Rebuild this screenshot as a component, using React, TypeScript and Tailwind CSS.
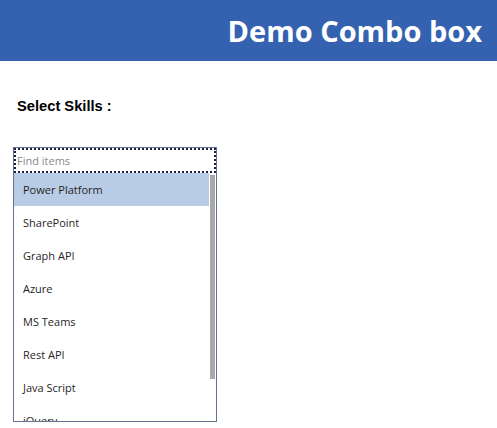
import React from 'react';

const skills = ['Power Platform', 'SharePoint', 'Graph API', 'Azure', 'MS Teams', 'Rest API', 'Java Script', 'jQuery'];

const App: React.FC = () => {
  return (
    <div className="w-[497px] h-[428px] bg-white overflow-hidden">
      <header className="h-[61px] bg-[#3562b0] flex items-center justify-end pr-[15px]">
        <h1 className="font-['Open_Sans',sans-serif] font-bold text-[29px] leading-none text-white">
          Demo Combo box
        </h1>
      </header>

      <div className="mt-[37px] pl-[17px] font-['Liberation_Sans',Arial,sans-serif] font-bold text-[14.7px] leading-[17px] text-black">
        Select Skills :
      </div>

      {/* Combo box */}
      <div className="mt-[32px] ml-[13px] w-[204px] h-[275px] border border-[#66708f] flex flex-col font-['Open_Sans',sans-serif]">
        <div className="h-[25px] shrink-0 border-2 border-dotted border-[#1c1f3d] flex items-center pl-[1px] pt-[1px] text-[11px] text-[#8a8a8a]">
          Find items
        </div>
        <div className="flex-1 flex overflow-hidden">
          <div className="flex-1 flex flex-col">
            {skills.map((skill, i) => (
              <div
                key={skill}
                className={
                  i === 0
                    ? 'h-[33px] shrink-0 flex items-center pl-[9px] pt-[2px] text-[11px] text-[#1f1f1f] bg-[#b9cce5]'
                    : 'h-[33px] shrink-0 flex items-center pl-[9px] pt-[2px] text-[11px] text-[#1f1f1f]'
                }
              >
                {skill}
              </div>
            ))}
          </div>
          <div className="w-[7px] pt-[2px] pl-[1px] pr-[1px]">
            <div className="h-[204px] bg-[#a8a8a8]" />
          </div>
        </div>
      </div>
    </div>
  );
};

export default App;
